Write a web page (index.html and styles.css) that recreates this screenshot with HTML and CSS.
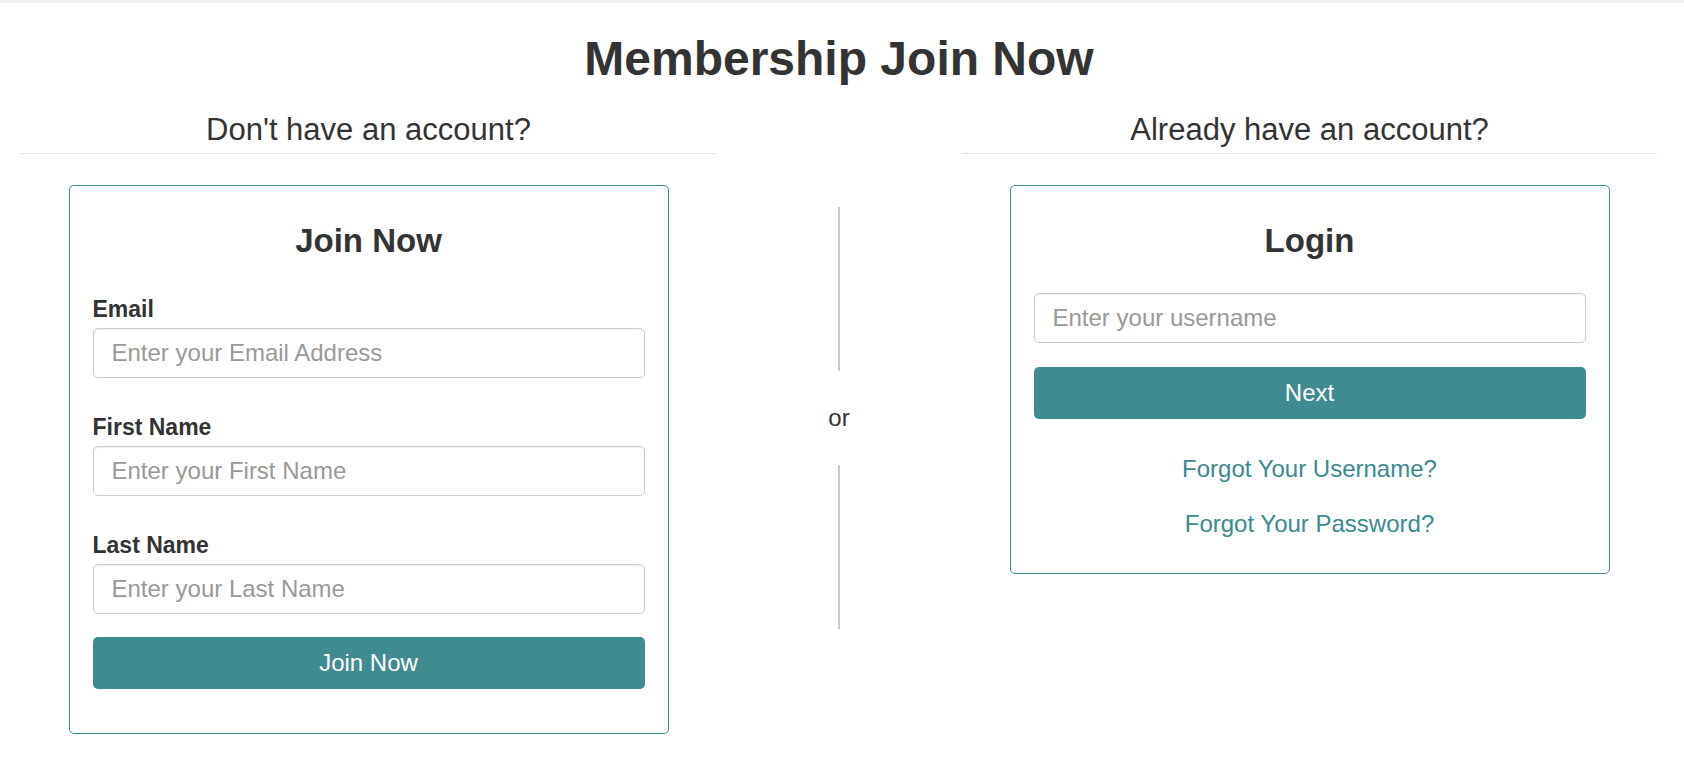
FILE: index.html
```html
<!DOCTYPE html>
<html lang="en">
<head>
  <meta charset="UTF-8" />
  <meta name="viewport" content="width=device-width, initial-scale=1.0"/>
  <title>Membership Join Now</title>
  <link rel="stylesheet" href="styles.css">
</head>
<body>
  <div class="top-bar"></div>

  <main class="page">
    <h1>Membership Join Now</h1>

    <div class="panels">
      <section class="panel">
        <h2 class="panel-title">Don't have an account?</h2>
        <form class="card join-card">
          <h3 class="card-title">Join Now</h3>
          <div class="field">
            <label for="email">Email</label>
            <input type="email" id="email" placeholder="Enter your Email Address" />
          </div>
          <div class="field">
            <label for="first-name">First Name</label>
            <input type="text" id="first-name" placeholder="Enter your First Name" />
          </div>
          <div class="field">
            <label for="last-name">Last Name</label>
            <input type="text" id="last-name" placeholder="Enter your Last Name" />
          </div>
          <button type="submit" class="btn">Join Now</button>
        </form>
      </section>

      <div class="divider">
        <span class="divider-line"></span>
        <span class="divider-text">or</span>
        <span class="divider-line"></span>
      </div>

      <section class="panel">
        <h2 class="panel-title">Already have an account?</h2>
        <form class="card login-card">
          <h3 class="card-title">Login</h3>
          <input type="text" id="username" placeholder="Enter your username" />
          <button type="submit" class="btn">Next</button>
          <div class="links">
            <a href="#">Forgot Your Username?</a>
            <a href="#">Forgot Your Password?</a>
          </div>
        </form>
      </section>
    </div>
  </main>
</body>
</html>
```

FILE: styles.css
```css
:root {
  --teal: #3f8c90;
  --teal-link: #3a8a8e;
  --text: #333333;
  --input-border: #cccccc;
  --rule: #e2e2e2;
}

* {
  box-sizing: border-box;
}

body {
  margin: 0;
  background: #ffffff;
  color: var(--text);
  font-family: 'Liberation Sans', Arial, Helvetica, sans-serif;
}

.top-bar {
  height: 3px;
  background: #f1f1f1;
}

.page {
  width: 1636px;
  margin-left: 21px;
}

h1 {
  margin: 28px 0 0;
  font-size: 48px;
  line-height: 55px;
  font-weight: 700;
  text-align: center;
}

.panels {
  display: grid;
  grid-template-columns: 695px 246px 695px;
  margin-top: 26px;
}

.panel-title {
  margin: 0;
  padding-bottom: 5px;
  border-bottom: 1px solid var(--rule);
  font-size: 31px;
  line-height: 36px;
  font-weight: 400;
  text-align: center;
}

/* Cards */
.card {
  width: 600px;
  margin: 31px auto 0;
  padding: 36px 23px 44px;
  border: 1px solid var(--teal);
  border-radius: 5px;
}

.login-card {
  padding-bottom: 35px;
}

.card-title {
  margin: 0 0 36px;
  font-size: 33px;
  line-height: 38px;
  font-weight: 700;
  text-align: center;
}

.login-card .card-title {
  margin-bottom: 33px;
}

.field + .field {
  margin-top: 36px;
}

label {
  display: block;
  margin-bottom: 5px;
  font-size: 23px;
  line-height: 27px;
  font-weight: 700;
}

input {
  display: block;
  width: 100%;
  height: 50px;
  padding: 0 18px;
  border: 1px solid var(--input-border);
  border-radius: 5px;
  box-shadow: inset 0 1px 1px rgba(0, 0, 0, 0.075);
  font-family: inherit;
  font-size: 24px;
  color: var(--text);
  outline: none;
}

input::placeholder {
  color: #999999;
}

.btn {
  display: block;
  width: 100%;
  height: 52px;
  margin-top: 24px;
  border: none;
  border-radius: 5px;
  background: var(--teal);
  color: #ffffff;
  font-family: inherit;
  font-size: 24px;
  cursor: pointer;
}

.join-card .btn {
  margin-top: 23px;
}

.links {
  display: flex;
  flex-direction: column;
  align-items: center;
  gap: 27px;
  margin-top: 36px;
}

.links a {
  color: var(--teal-link);
  font-size: 24px;
  line-height: 28px;
  text-decoration: none;
}

/* Divider between the two panels */
.divider {
  display: flex;
  flex-direction: column;
  align-items: center;
  padding-top: 95px;
}

.divider-line {
  width: 2px;
  height: 164px;
  background: #c8c8c8;
}

.divider-text {
  margin: 33px 0;
  font-size: 24px;
  line-height: 28px;
}
```
